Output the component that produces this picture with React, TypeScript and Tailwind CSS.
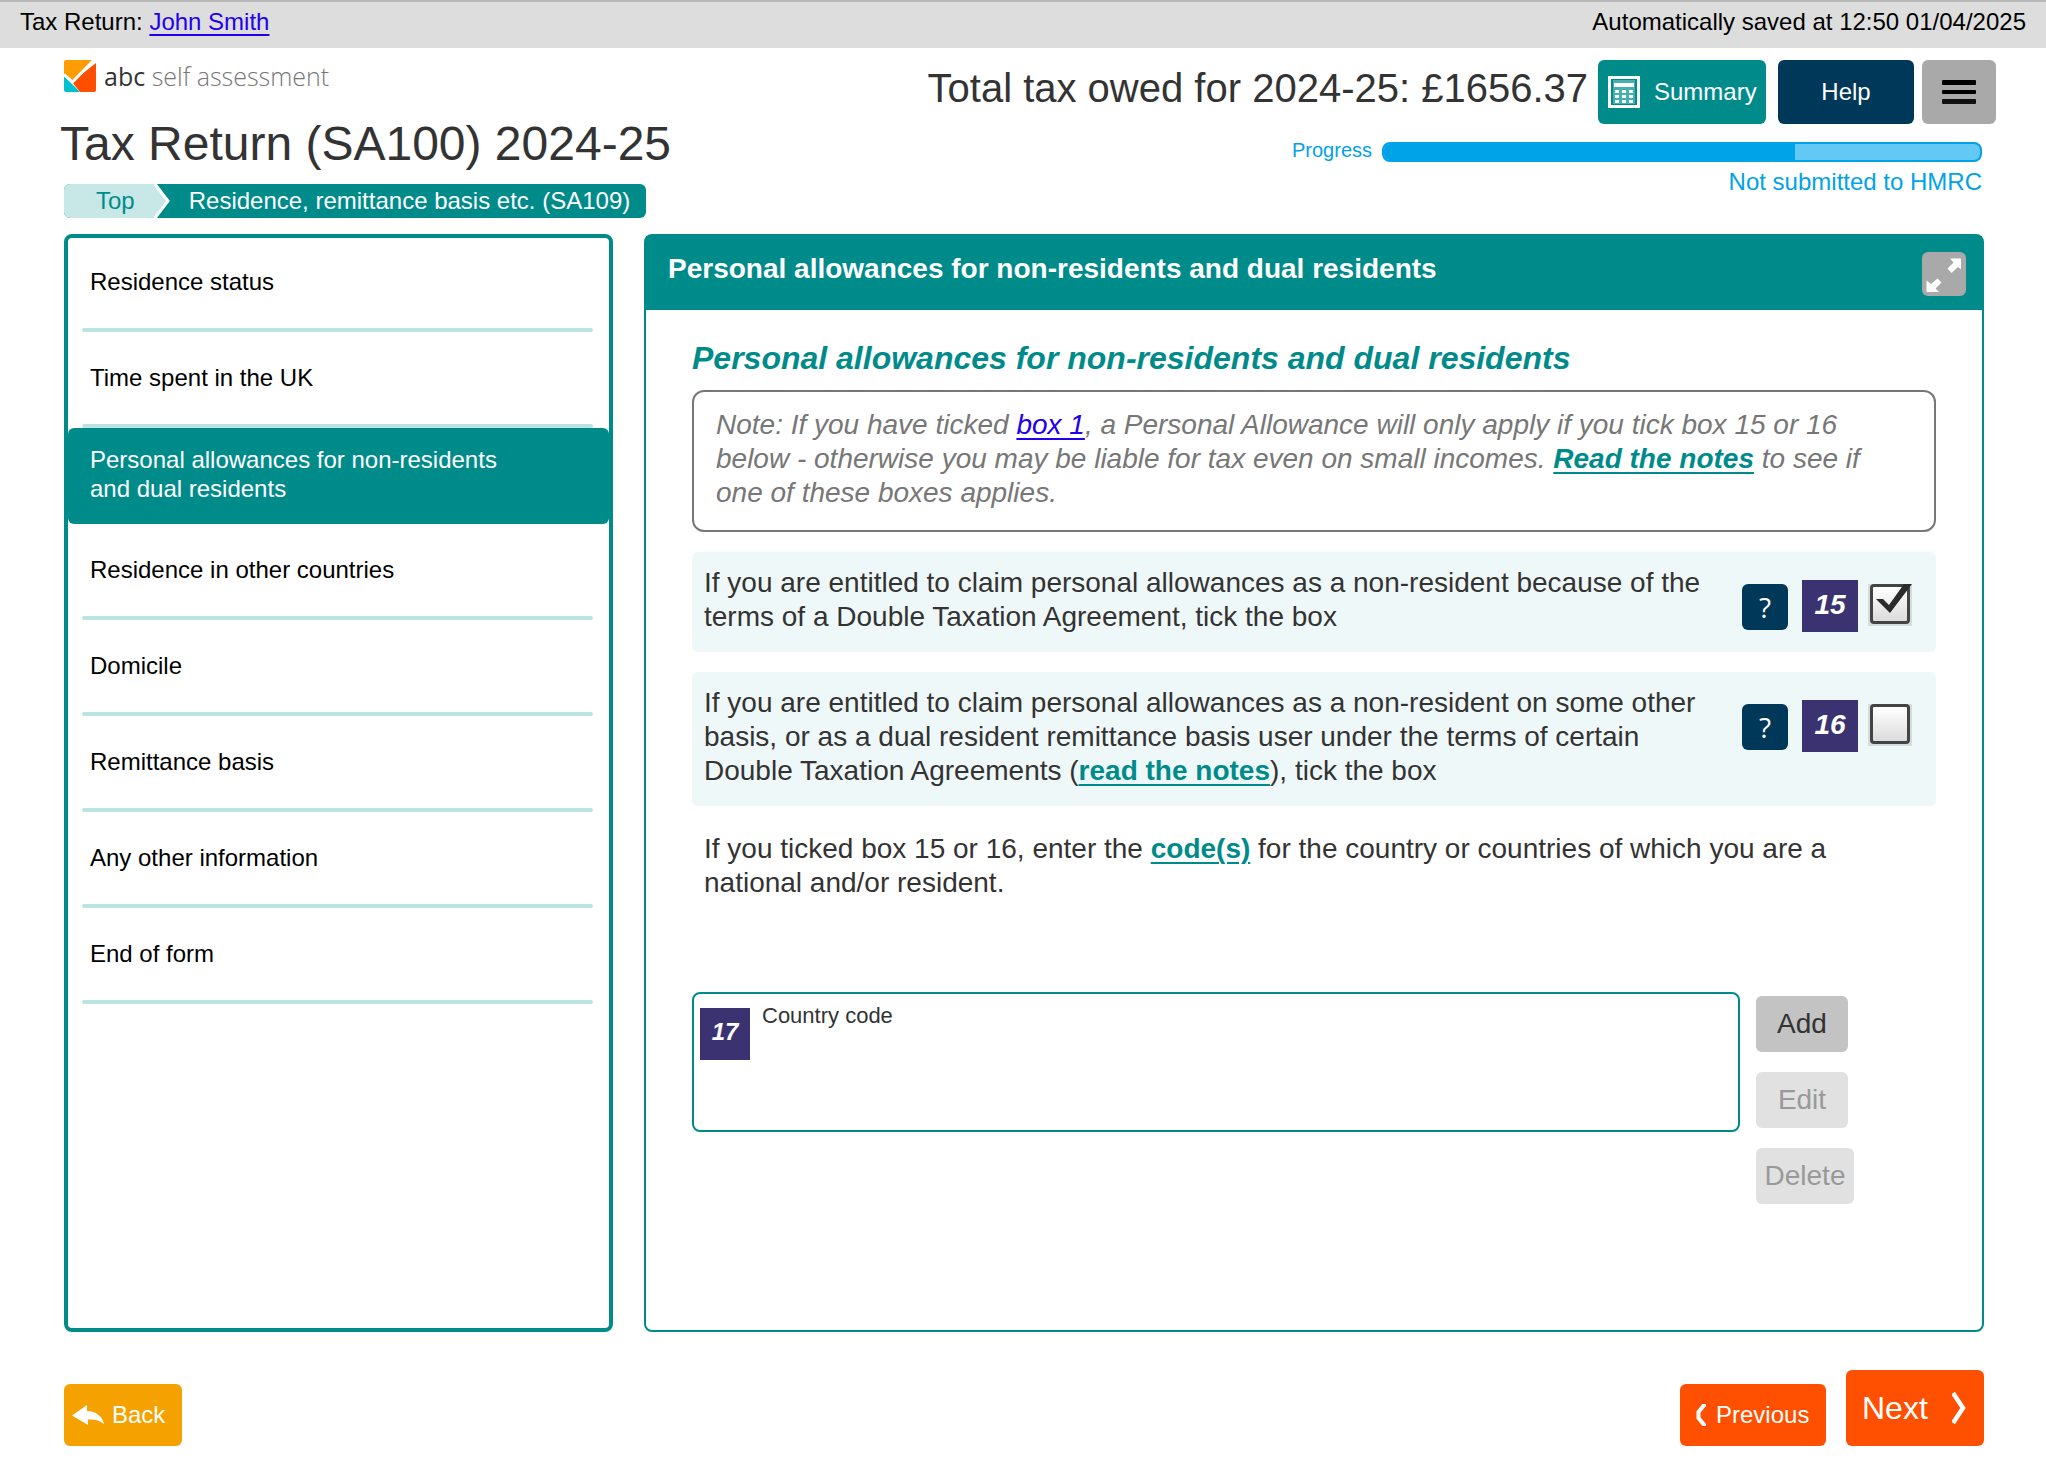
import type { ReactNode } from 'react';

const sections = [
  { title: 'Residence status', active: false },
  { title: 'Time spent in the UK', active: false },
  { title: 'Personal allowances for non-residents and dual residents', active: true },
  { title: 'Residence in other countries', active: false },
  { title: 'Domicile', active: false },
  { title: 'Remittance basis', active: false },
  { title: 'Any other information', active: false },
  { title: 'End of form', active: false },
];

function LogoMark() {
  return (
    <svg width="32" height="32" viewBox="0 0 32 32" aria-hidden="true">
      <path d="M2 0h27L8 22 0 14V2a2 2 0 0 1 2-2z" fill="#ff9c00" />
      <path d="M32 3v27a2 2 0 0 1-2 2H16L8 22z" fill="#ff4e00" />
      <path d="M0 16l16 16H2a2 2 0 0 1-2-2z" fill="#00c1d0" />
      <path d="M0 14.500l8.500 7.500L30 0" fill="none" stroke="#fff" strokeWidth="3" />
    </svg>
  );
}

function CalculatorIcon() {
  return (
    <svg width="32" height="32" viewBox="0 0 32 32" aria-hidden="true">
      <rect x="1.500" y="1.500" width="29" height="29" fill="none" stroke="#fff" strokeWidth="3" />
      <rect x="5" y="4" width="22" height="24" fill="#45b0ae" />
      <rect x="6" y="7" width="20" height="4" fill="#fff" />
      {[14, 19, 24].map((y) =>
        [7, 14, 21].map((x) => <rect key={`${x}-${y}`} x={x} y={y} width="4" height="3" fill="#fff" />)
      )}
    </svg>
  );
}

function MenuIcon() {
  return (
    <svg width="34" height="26" viewBox="0 0 34 26" aria-hidden="true">
      <rect y="1" width="34" height="5" rx="1" fill="#000" />
      <rect y="11" width="34" height="4" rx="1" fill="#000" />
      <rect y="20" width="34" height="5" rx="1" fill="#111" />
    </svg>
  );
}

function ExpandIcon() {
  return (
    <svg width="44" height="44" viewBox="0 0 44 44" aria-hidden="true">
      <path d="M28 6.500h11v11l-3-2.500-6.500 6-4-4.500 6-6z" fill="#fff" />
      <path d="M4.500 28.500v11.500h12.500l-3.500-3.500 6-6-4-4-6.500 5.500z" fill="#fff" />
    </svg>
  );
}

function BackIcon() {
  return (
    <svg width="32" height="20" viewBox="0 0 32 20" aria-hidden="true">
      <path d="M0 10.500L15 0v6c9 0 16 6 17 13-5-4-9-5-16-4.500V20z" fill="#fff" />
    </svg>
  );
}

type BoxRowProps = {
  number: number;
  checked?: boolean;
  children: ReactNode;
};

function BoxRow({ number, checked = false, children }: BoxRowProps) {
  const id = `box-${number}`;

  return (
    <div className="flex items-start rounded-md bg-[#eff8f9] pt-3.5 pr-6 pb-4.5 pl-3">
      <label htmlFor={id} className="flex-1 pr-6">
        {children}
      </label>
      <button
        type="button"
        aria-label={`Help with box ${number}`}
        className="mt-4.5 mr-3.5 h-[46px] w-[46px] rounded-md bg-[#003859] text-center font-['Open_Sans',sans-serif] text-white"
      >
        ?
      </button>
      <div className="mt-3.5 mr-2.5 h-[52px] w-14 bg-[#3b3371] pt-2 text-center font-bold text-white italic">
        {number}
      </div>
      <div className="relative mt-4.5 h-[42px] w-11 bg-[#d5dcdd] px-0.5">
        <input
          id={id}
          type="checkbox"
          defaultChecked={checked}
          className="block h-10 w-10 appearance-none rounded-sm border-3 border-[#444] bg-linear-to-b from-white to-[#dcdcdc]"
        />
        {checked && (
          <svg className="pointer-events-none absolute top-0 right-0" width="36" height="30" viewBox="0 0 36 30" aria-hidden="true">
            <path d="M0 15h7l6 6L28 0h8L14 29z" fill="#2b2b2b" />
          </svg>
        )}
      </div>
    </div>
  );
}

export default function App() {
  return (
    <div className="bg-white font-['Liberation_Sans',Arial,sans-serif] text-2xl leading-7 text-black">
      {/* Status bar */}
      <div className="flex h-12 justify-between border-t-2 border-[#b8b8b8] bg-[#ddd] px-5 pt-1.5">
        <p>
          Tax Return:{' '}
          <a href="#client" className="text-[#2200ee] underline decoration-2 underline-offset-4">
            John Smith
          </a>
        </p>
        <p>Automatically saved at 12:50 01/04/2025</p>
      </div>

      {/* Header */}
      <header className="flex justify-between pt-3 pr-[50px] pl-15">
        <div>
          <div className="flex h-8 items-center gap-2 pl-1 font-['Open_Sans',sans-serif] text-[25px]">
            <LogoMark />
            <span className="font-light text-[#777]">
              <span className="font-normal text-[#333]">abc</span> self assessment
            </span>
          </div>
          <h1 className="mt-6 text-5xl leading-14 text-[#333]">Tax Return (SA100) 2024-25</h1>
          <nav aria-label="Breadcrumb" className="mt-3 ml-1 flex h-[34px] w-fit overflow-hidden rounded-md bg-[#008b8b] leading-[34px]">
            <a href="#top" className="bg-[#c8e8e8] pr-4 pl-8 text-[#008b8b]">
              Top
            </a>
            <svg width="22" height="34" viewBox="0 0 22 34" aria-hidden="true">
              <path d="M0 0h4l13 17L4 34H0z" fill="#c8e8e8" />
              <path d="M4 0l13 17L4 34" fill="none" stroke="#fff" strokeWidth="3" />
            </svg>
            <a href="#sa109" className="px-4 text-white">
              Residence, remittance basis etc. (SA109)
            </a>
          </nav>
        </div>

        <div>
          <div className="flex items-start">
            <p className="mt-1 mr-2.5 text-[40px] leading-12 text-[#333]">Total tax owed for 2024-25: £1656.37</p>
            <button type="button" className="mr-3 flex h-16 w-[168px] items-center gap-3.5 rounded-md bg-[#008b8b] pl-2.5 text-white">
              <CalculatorIcon />
              Summary
            </button>
            <button type="button" className="mr-2 h-16 w-[136px] rounded-md bg-[#003859] text-white">
              Help
            </button>
            <button type="button" aria-label="Menu" className="flex h-16 w-[74px] items-center justify-center rounded-md bg-[#a9a9a9]">
              <MenuIcon />
            </button>
          </div>
          <div className="mt-3 flex items-start justify-end gap-2.5 pr-3.5">
            <span className="text-xl leading-7 text-[#00a2e8]">Progress</span>
            <div
              role="progressbar"
              aria-label="Progress"
              aria-valuenow={69}
              aria-valuemin={0}
              aria-valuemax={100}
              className="mt-1.5 h-5 w-[600px] overflow-hidden rounded-lg border-2 border-[#00a2e8] bg-[#64c8f5]"
            >
              <div className="h-full w-[69%] bg-[#00a2e8]" />
            </div>
          </div>
          <p className="mt-1 pr-3.5 text-right text-[#00a2e8]">Not submitted to HMRC</p>
        </div>
      </header>

      {/* Form */}
      <main className="mt-4 flex gap-[31px] pr-[62px] pl-16">
        <nav aria-label="Form sections" className="w-[549px] shrink-0 rounded-lg border-4 border-[#008b8b]">
          <ul className="-mt-0.5">
            {sections.map((section) => (
              <li key={section.title}>
                {section.active ? (
                  <a
                    href="#section"
                    aria-current="page"
                    className="flex h-24 items-center rounded-md bg-[#008b8b] pr-[100px] pb-1 pl-[22px] leading-[29px] text-white"
                  >
                    {section.title}
                  </a>
                ) : (
                  <a href="#section" className="block pr-4 pl-3.5">
                    <span className="flex h-[92px] items-center pl-2">{section.title}</span>
                    <span className="block h-1 rounded-full bg-[#bce3e4]" />
                  </a>
                )}
              </li>
            ))}
          </ul>
        </nav>

        <section className="flex-1 rounded-lg border-2 border-[#008b8b] pb-[126px]">
          <div className="flex h-[74px] items-start justify-between bg-[#008b8b] pr-4 pl-[22px]">
            <h2 className="pt-4 text-[28px] leading-[34px] font-bold text-white">
              Personal allowances for non-residents and dual residents
            </h2>
            <button type="button" aria-label="Expand" className="mt-4 h-11 w-11 rounded-md bg-[#a9a9a9]">
              <ExpandIcon />
            </button>
          </div>

          <div className="pt-7 pr-[46px] pl-[46px] text-[28px] leading-[34px] text-[#333]">
            <h3 className="text-[32px] leading-10 font-bold text-[#008b8b] italic">
              Personal allowances for non-residents and dual residents
            </h3>

            <p className="mt-3 rounded-xl border-2 border-[#777] px-[22px] pt-4 pb-5 text-[#777] italic">
              Note: If you have ticked{' '}
              <a href="#box-1" className="text-[#2200ee] underline decoration-2 underline-offset-4">
                box 1
              </a>
              , a Personal Allowance will only apply if you tick box 15 or 16 below - otherwise you may be liable for tax
              even on small incomes.{' '}
              <a href="#notes" className="font-bold text-[#008b8b] underline decoration-2 underline-offset-4">
                Read the notes
              </a>{' '}
              to see if one of these boxes applies.
            </p>

            <div className="mt-5 flex flex-col gap-5">
              <BoxRow number={15} checked>
                If you are entitled to claim personal allowances as a non-resident because of the terms of a Double
                Taxation Agreement, tick the box
              </BoxRow>
              <BoxRow number={16}>
                If you are entitled to claim personal allowances as a non-resident on some other basis, or as a dual
                resident remittance basis user under the terms of certain Double Taxation Agreements (
                <a href="#notes" className="font-bold text-[#008b8b] underline decoration-2 underline-offset-4">
                  read the notes
                </a>
                ), tick the box
              </BoxRow>
            </div>

            <p className="mt-[26px] px-3">
              If you ticked box 15 or 16, enter the{' '}
              <a href="#codes" className="font-bold text-[#008b8b] underline decoration-2 underline-offset-4">
                code(s)
              </a>{' '}
              for the country or countries of which you are a national and/or resident.
            </p>

            <div className="mt-23 flex items-start gap-4 pr-20">
              <div className="flex h-[140px] flex-1 gap-3 rounded-lg border-2 border-[#008b8b] pl-1.5">
                <div className="mt-3.5 h-[52px] w-[50px] bg-[#3b3371] pt-2 text-center text-2xl font-bold text-white italic">
                  17
                </div>
                <p className="mt-2 text-[22px] leading-7">Country code</p>
              </div>
              <div className="flex w-[100px] flex-col items-start gap-5 pt-1">
                <button type="button" className="h-14 w-[92px] rounded-md bg-[#c3c3c3]">
                  Add
                </button>
                <button type="button" disabled className="h-14 w-[92px] rounded-md bg-[#e1e1e1] text-[#999]">
                  Edit
                </button>
                <button type="button" disabled className="h-14 w-[98px] rounded-md bg-[#e1e1e1] text-[#999]">
                  Delete
                </button>
              </div>
            </div>
          </div>
        </section>
      </main>

      {/* Footer buttons */}
      <footer className="mt-[38px] flex items-end pr-[62px] pb-5 pl-16 text-white">
        <button type="button" className="mr-auto flex h-[62px] w-[118px] items-center gap-2 rounded-md bg-[#f5a100] pl-2">
          <BackIcon />
          Back
        </button>
        <button type="button" className="mr-5 flex h-[62px] w-[146px] items-center gap-2.5 rounded-md bg-[#ff4f00] pl-4">
          <svg width="10" height="22" viewBox="0 0 10 22" aria-hidden="true">
            <path d="M9 0L2.500 8v6L9 22" fill="none" stroke="#fff" strokeWidth="4" />
          </svg>
          Previous
        </button>
        <button type="button" className="flex h-[76px] w-[138px] items-center justify-between rounded-md bg-[#ff4f00] pr-[18px] pl-4 text-[32px]">
          Next
          <svg width="14" height="32" viewBox="0 0 14 32" aria-hidden="true">
            <path d="M1 1l10 15L1 31" fill="none" stroke="#fff" strokeWidth="4.500" />
          </svg>
        </button>
      </footer>
    </div>
  );
}
